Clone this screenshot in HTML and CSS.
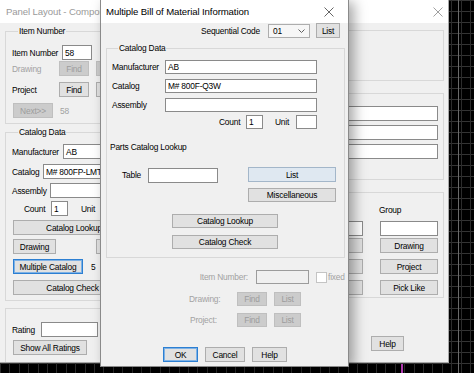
FILE: index.html
```html
<!DOCTYPE html>
<html lang="en">
<head>
    <meta charset="UTF-8">
    <meta name="viewport" content="width=device-width, initial-scale=1.0">
    <title>Multiple Bill of Material Information</title>
    <link rel="stylesheet" href="styles.css">
</head>
<body>
<div class="desktop">
    <div class="cad-mark"></div>

    <!-- window behind the dialog -->
    <div class="win back-win">
        <div class="titlebar">
            <span class="title back-title">Panel Layout - Component</span>
            <svg class="close" width="10" height="10" viewBox="0 0 10 10"><path d="M0.5 0.5L9.5 9.5M9.5 0.5L0.5 9.5" stroke="currentColor" fill="none"/></svg>
        </div>
        <div class="back-body">
            <div class="left-col">
                <div class="group g-item">
                    <div class="group-title">Item Number</div>
                    <div class="row mt7"><span class="lbl" style="width:50px">Item Number</span><span class="txt" style="width:30px">58</span></div>
                    <div class="row mt1"><span class="lbl dim" style="width:47px">Drawing</span><span class="btn off" style="width:30px">Find</span><span class="btn off ml7" style="width:30px"></span></div>
                    <div class="row mt6"><span class="lbl" style="width:47px">Project</span><span class="btn" style="width:30px">Find</span><span class="btn ml7" style="width:30px"></span></div>
                    <div class="row mt6"><span class="btn off ml1" style="width:40px">Next&gt;&gt;</span><span class="lbl dim ml7">58</span></div>
                </div>

                <div class="group g-cat">
                    <div class="group-title">Catalog Data</div>
                    <div class="row mt5"><span class="lbl" style="width:51px">Manufacturer</span><span class="txt" style="width:100px">AB</span></div>
                    <div class="row mt5"><span class="lbl" style="width:31px">Catalog</span><span class="txt" style="width:120px">M# 800FP-LMT</span></div>
                    <div class="row mt4"><span class="lbl" style="width:38px">Assembly</span><span class="txt" style="width:110px"></span></div>
                    <div class="row mt3"><span class="lbl" style="width:27px;margin-left:12px">Count</span><span class="txt" style="width:17px">1</span><span class="lbl" style="margin-left:13px">Unit</span></div>
                    <div class="row mt4"><span class="btn ml1" style="width:122px">Catalog Lookup</span></div>
                    <div class="row mt4"><span class="btn ml1" style="width:43px">Drawing</span><span class="btn" style="width:40px;margin-left:40px"></span></div>
                    <div class="row mt5"><span class="btn focus ml1" style="width:70px">Multiple Catalog</span><span class="lbl" style="margin-left:8px">5</span></div>
                    <div class="row mt6"><span class="btn ml1" style="width:119px">Catalog Check</span></div>
                </div>

                <div class="group g-rating">
                    <div class="row mt13"><span class="lbl" style="width:29px">Rating</span><span class="txt" style="width:57px"></span></div>
                    <div class="row mt3"><span class="btn ml1" style="width:74px">Show All Ratings</span></div>
                </div>
            </div>

            <div class="right-col">
                <div class="group g-a"></div>
                <div class="group g-b">
                    <div class="row mt12 end"><span class="txt" style="width:120px"></span></div>
                    <div class="row mt4 end"><span class="txt" style="width:120px"></span></div>
                    <div class="row mt4 end"><span class="txt" style="width:120px"></span></div>
                </div>
                <div class="group g-c">
                    <div class="pair mt10 lbl-row"><span></span><span class="lbl group-lbl">Group</span></div>
                    <div class="pair mt5"><span class="txt"></span><span class="txt"></span></div>
                    <div class="pair mt2"><span class="btn"></span><span class="btn">Drawing</span></div>
                    <div class="pair mt6"><span class="btn"></span><span class="btn">Project</span></div>
                    <div class="pair mt6"><span class="btn"></span><span class="btn">Pick Like</span></div>
                </div>
                <div class="row back-help"><span class="btn" style="width:33px">Help</span></div>
            </div>
        </div>
    </div>

    <!-- active dialog -->
    <div class="win dlg">
        <div class="titlebar">
            <span class="title">Multiple Bill of Material Information</span>
            <svg class="close" width="10" height="10" viewBox="0 0 10 10"><path d="M0.5 0.5L9.5 9.5M9.5 0.5L0.5 9.5" stroke="currentColor" fill="none"/></svg>
        </div>
        <div class="dlg-body">
            <div class="row seq">
                <span class="lbl">Sequential Code</span>
                <span class="combo">01<svg width="7" height="4" viewBox="0 0 7 4"><path d="M0.5 0.5L3.5 3.5L6.5 0.5" fill="none" stroke="#606060"/></svg></span>
                <span class="btn" style="width:24px">List</span>
            </div>

            <div class="group g-dlg">
                <div class="group-title">Catalog Data</div>
                <div class="row h14 mt5"><span class="lbl" style="width:53px">Manufacturer</span><span class="txt" style="width:152px">AB</span></div>
                <div class="row h14 mt5"><span class="lbl" style="width:53px">Catalog</span><span class="txt" style="width:152px">M# 800F-Q3W</span></div>
                <div class="row h14 mt5"><span class="lbl" style="width:53px">Assembly</span><span class="txt" style="width:152px"></span></div>
                <div class="row h14 mt3"><span class="lbl" style="width:27px;margin-left:107px">Count</span><span class="txt" style="width:17px">1</span><span class="lbl" style="width:21px;margin-left:12px">Unit</span><span class="txt" style="width:21px"></span></div>
                <div class="row h12 mt12"><span class="lbl" style="margin-left:-2px">Parts Catalog Lookup</span></div>
                <div class="row h16 mt14"><span class="lbl" style="width:26px;margin-left:10px">Table</span><span class="txt tbl" style="width:70px"></span><span class="btn hot" style="width:88px;margin-left:30px">List</span></div>
                <div class="row h14 mt5"><span class="btn" style="width:88px;margin-left:136px">Miscellaneous</span></div>
                <div class="row h14 mt12"><span class="btn" style="width:106px;margin-left:60px">Catalog Lookup</span></div>
                <div class="row h14 mt7"><span class="btn" style="width:106px;margin-left:60px">Catalog Check</span></div>
            </div>

            <div class="row h14 mt12">
                <span class="lbl dim right" style="width:147px">Item Number:</span>
                <span class="txt off" style="width:53px;margin-left:8px"></span>
                <span class="check"></span>
                <span class="lbl dim" style="margin-left:1px">fixed</span>
            </div>
            <div class="row h14 mt8">
                <span class="lbl dim" style="width:48px;margin-left:88px">Drawing:</span>
                <span class="btn off" style="width:30px">Find</span>
                <span class="btn off ml7" style="width:27px">List</span>
            </div>
            <div class="row h14 mt7">
                <span class="lbl dim" style="width:47px;margin-left:89px">Project:</span>
                <span class="btn off" style="width:30px">Find</span>
                <span class="btn off ml7" style="width:27px">List</span>
            </div>
            <div class="row mt20 dlg-buttons">
                <span class="btn focus" style="width:35px">OK</span>
                <span class="btn ml7" style="width:40px">Cancel</span>
                <span class="btn ml7" style="width:35px">Help</span>
            </div>
        </div>
    </div>
</div>
</body>
</html>
```

FILE: styles.css
```css
*{
    box-sizing: border-box;
}
body{
    margin: 0;
    background: #000;
    font-family: "Liberation Sans", Arial, sans-serif;
    font-size: 8.4px;
    letter-spacing: -0.2px;
    color: #000;
}
.desktop{
    position: relative;
    width: 474px;
    height: 373px;
    overflow: hidden;
    background-color: #000;
    background-image:
        linear-gradient(to right, transparent 458px, #6a6a6a 458px 459px, transparent 459px),
        repeating-linear-gradient(to right, #2c2c2c 0 1px, transparent 1px 9.4px),
        repeating-linear-gradient(to bottom, #343434 0 1px, transparent 1px 11px);
}
.cad-mark{
    position: absolute;
    left: 401px;
    top: 364px;
    width: 2px;
    height: 9px;
    background: #b03ab0;
}

/* windows */
.win{
    position: absolute;
    top: 0;
    background: #f0f0f0;
    overflow: hidden;
}
.back-win{
    left: 0;
    width: 449px;
    height: 363px;
    border-right: 1px solid #a8a8a8;
    border-bottom: 1px solid #a8a8a8;
}
.dlg{
    left: 100px;
    width: 249px;
    height: 367px;
    border: 1px solid #8a8a8a;
    border-top: 0;
    box-shadow: 5px 2px 12px rgba(0, 0, 0, .35);
    overflow: visible;
}
.titlebar{
    height: 23px;
    background: #fff;
    display: flex;
    align-items: center;
    justify-content: space-between;
    padding: 0 5px 0 6px;
}
.back-win .titlebar{
    color: #9a9a9a;
}
.title{
    font-size: 9.6px;
    letter-spacing: -0.1px;
    white-space: nowrap;
}
.back-title{
    width: 94px;
    overflow: hidden;
}
.dlg .titlebar{
    padding: 0 14px 0 5px;
}
.close{
    color: #666;
}
.back-win .close{
    color: #a0a0a0;
}

/* generic controls */
.row{
    display: flex;
    align-items: center;
    height: 15px;
}
.row.end{
    justify-content: flex-end;
}
.h12{ height: 12px; }
.h14{ height: 14px; }
.h16{ height: 16px; }
.mt1{ margin-top: 1px; }
.mt2{ margin-top: 2px; }
.mt3{ margin-top: 3px; }
.mt4{ margin-top: 4px; }
.mt5{ margin-top: 5px; }
.mt6{ margin-top: 6px; }
.mt7{ margin-top: 7px; }
.mt8{ margin-top: 8px; }
.mt10{ margin-top: 10px; }
.mt12{ margin-top: 12px; }
.mt13{ margin-top: 13px; }
.mt14{ margin-top: 14px; }
.mt20{ margin-top: 20px; }
.ml1{ margin-left: 1px; }
.ml7{ margin-left: 7px; }

.lbl{
    white-space: nowrap;
    flex-shrink: 0;
}
.lbl.right{
    text-align: right;
}
.dim{
    color: #a2a2a2;
}
.txt{
    height: 100%;
    flex-shrink: 0;
    background: #fff;
    border: 1px solid #8a8a8a;
    padding-left: 2px;
    display: flex;
    align-items: center;
    white-space: nowrap;
    overflow: hidden;
}
.txt.off{
    background: #f0f0f0;
    border-color: #9c9c9c;
}
.txt.tbl{
    height: 15px;
    margin-top: 1px;
}
.btn{
    height: 100%;
    flex-shrink: 0;
    background: #e1e1e1;
    border: 1px solid #adadad;
    display: flex;
    align-items: center;
    justify-content: center;
    white-space: nowrap;
    overflow: hidden;
}
.btn.off{
    background: #cccccc;
    border-color: #bfbfbf;
    color: #9c9c9c;
}
.btn.hot{
    background: #dfe8f1;
    border-color: #a3b6c9;
    height: 15px;
    margin-bottom: 1px;
}
.btn.focus{
    border-color: #2c7fd2;
    box-shadow: inset 0 0 0 1px #7fb2e5;
}
.check{
    width: 11px;
    height: 11px;
    margin-left: 7px;
    background: #fff;
    border: 1px solid #c4c4c4;
}
.combo{
    width: 42px;
    height: 14px;
    margin: 0 6px 0 8px;
    background: #f6f6f6;
    border: 1px solid #adadad;
    display: flex;
    align-items: center;
    justify-content: space-between;
    padding: 0 4px 0 4px;
}

/* group boxes */
.group{
    border: 1px solid #d8d8d8;
}
.group-title{
    margin: -7px 0 0 6px;
    height: 13px;
    line-height: 13px;
    width: max-content;
    padding: 0 1px;
    background: #f0f0f0;
}

/* back window layout */
.back-body{
    display: flex;
    justify-content: space-between;
    padding: 0 4px 0 5px;
}
.left-col{
    width: 95px;
    overflow: hidden;
}
.left-col .group{
    width: 200px;
    padding-left: 6px;
}
.g-item{
    margin-top: 8px;
    padding-bottom: 5px;
}
.g-cat{
    margin-top: 8px;
    padding-bottom: 5px;
}
.g-rating{
    margin-top: 7px;
    padding-bottom: 20px;
}
.right-col{
    width: 140px;
}
.g-a{
    margin-top: 7px;
    height: 51px;
}
.g-b{
    margin-top: 12px;
    padding: 0 5px 20px 0;
}
.g-c{
    margin-top: 12px;
    padding: 0 5px 2px 8px;
}
.pair{
    display: grid;
    grid-template-columns: 50px 58px;
    column-gap: 17px;
    height: 15px;
}
.pair.lbl-row{
    height: 13px;
    align-items: center;
}
.group-lbl{
    margin-left: -1px;
}
.back-help{
    margin: 38px 0 0 67px;
}

/* dialog layout */
.seq{
    justify-content: flex-end;
    padding-right: 8px;
}
.g-dlg{
    margin: 10px 3px 0 5px;
    padding: 0 7px 8px 5px;
}
.dlg-buttons{
    margin-left: 62px;
}
```
